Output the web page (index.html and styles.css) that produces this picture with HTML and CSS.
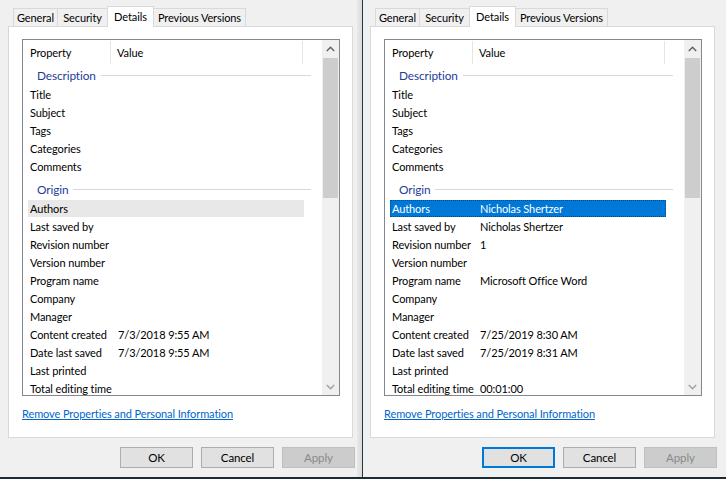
FILE: index.html
```html
<!DOCTYPE html>
<html>
<head>
<meta charset="utf-8">
<link rel="stylesheet" href="styles.css">
</head>
<body>
<div class="screen">
  <div class="dialog">
    <div class="tabs">
      <div class="tab tab-general">General</div>
      <div class="tab tab-security">Security</div>
      <div class="tab tab-details tab-active">Details</div>
      <div class="tab tab-previous">Previous Versions</div>
    </div>
    <div class="page">
      <div class="listbox">
        <div class="list">
          <div class="list-header"><div class="col-prop">Property</div><div class="col-val">Value</div><div class="col-rest"></div></div>
          <div class="group group-first"><span>Description</span></div>
          <div class="row"><span class="k">Title</span><span class="v"></span></div>
          <div class="row"><span class="k">Subject</span><span class="v"></span></div>
          <div class="row"><span class="k">Tags</span><span class="v"></span></div>
          <div class="row"><span class="k">Categories</span><span class="v"></span></div>
          <div class="row"><span class="k">Comments</span><span class="v"></span></div>
          <div class="group"><span>Origin</span></div>
          <div class="row row-hover"><span class="k">Authors</span><span class="v"></span></div>
          <div class="row"><span class="k">Last saved by</span><span class="v"></span></div>
          <div class="row"><span class="k">Revision number</span><span class="v"></span></div>
          <div class="row"><span class="k">Version number</span><span class="v"></span></div>
          <div class="row"><span class="k">Program name</span><span class="v"></span></div>
          <div class="row"><span class="k">Company</span><span class="v"></span></div>
          <div class="row"><span class="k">Manager</span><span class="v"></span></div>
          <div class="row"><span class="k">Content created</span><span class="v">7/3/2018 9:55 AM</span></div>
          <div class="row"><span class="k">Date last saved</span><span class="v">7/3/2018 9:55 AM</span></div>
          <div class="row"><span class="k">Last printed</span><span class="v"></span></div>
          <div class="row"><span class="k">Total editing time</span><span class="v"></span></div>
        </div>
        <div class="scrollbar">
          <div class="sb-btn"><svg width="9" height="6" viewBox="0 0 9 6"><polyline points="0.8,5 4.5,1.3 8.2,5" fill="none" stroke="#606060" stroke-width="1.4"/></svg></div>
          <div class="sb-track"><div class="sb-thumb"></div></div>
          <div class="sb-btn"><svg width="9" height="6" viewBox="0 0 9 6"><polyline points="0.8,1 4.5,4.7 8.2,1" fill="none" stroke="#a0a0a0" stroke-width="1.4"/></svg></div>
        </div>
      </div>
      <a class="link" href="#">Remove Properties and Personal Information</a>
    </div>
    <div class="buttons">
      <div class="btn">OK</div>
      <div class="btn">Cancel</div>
      <div class="btn btn-disabled">Apply</div>
    </div>
  </div>
  <div class="edge"></div>
  <div class="divider"></div>
  <div class="dialog dialog-right">
    <div class="tabs">
      <div class="tab tab-general">General</div>
      <div class="tab tab-security">Security</div>
      <div class="tab tab-details tab-active">Details</div>
      <div class="tab tab-previous">Previous Versions</div>
    </div>
    <div class="page">
      <div class="listbox">
        <div class="list">
          <div class="list-header"><div class="col-prop">Property</div><div class="col-val">Value</div><div class="col-rest"></div></div>
          <div class="group group-first"><span>Description</span></div>
          <div class="row"><span class="k">Title</span><span class="v"></span></div>
          <div class="row"><span class="k">Subject</span><span class="v"></span></div>
          <div class="row"><span class="k">Tags</span><span class="v"></span></div>
          <div class="row"><span class="k">Categories</span><span class="v"></span></div>
          <div class="row"><span class="k">Comments</span><span class="v"></span></div>
          <div class="group"><span>Origin</span></div>
          <div class="row row-selected"><span class="k">Authors</span><span class="v">Nicholas Shertzer</span></div>
          <div class="row"><span class="k">Last saved by</span><span class="v">Nicholas Shertzer</span></div>
          <div class="row"><span class="k">Revision number</span><span class="v">1</span></div>
          <div class="row"><span class="k">Version number</span><span class="v"></span></div>
          <div class="row"><span class="k">Program name</span><span class="v">Microsoft Office Word</span></div>
          <div class="row"><span class="k">Company</span><span class="v"></span></div>
          <div class="row"><span class="k">Manager</span><span class="v"></span></div>
          <div class="row"><span class="k">Content created</span><span class="v">7/25/2019 8:30 AM</span></div>
          <div class="row"><span class="k">Date last saved</span><span class="v">7/25/2019 8:31 AM</span></div>
          <div class="row"><span class="k">Last printed</span><span class="v"></span></div>
          <div class="row"><span class="k">Total editing time</span><span class="v">00:01:00</span></div>
        </div>
        <div class="scrollbar">
          <div class="sb-btn"><svg width="9" height="6" viewBox="0 0 9 6"><polyline points="0.8,5 4.5,1.3 8.2,5" fill="none" stroke="#606060" stroke-width="1.4"/></svg></div>
          <div class="sb-track"><div class="sb-thumb"></div></div>
          <div class="sb-btn"><svg width="9" height="6" viewBox="0 0 9 6"><polyline points="0.8,1 4.5,4.7 8.2,1" fill="none" stroke="#a0a0a0" stroke-width="1.4"/></svg></div>
        </div>
      </div>
      <a class="link" href="#">Remove Properties and Personal Information</a>
    </div>
    <div class="buttons">
      <div class="btn btn-default">OK</div>
      <div class="btn">Cancel</div>
      <div class="btn btn-disabled">Apply</div>
    </div>
  </div>
</div>
<div class="taskbar"></div>
</body>
</html>
```
FILE: styles.css
```css
html, body {
  margin: 0;
  padding: 0;
}
body {
  width: 726px;
  height: 479px;
  overflow: hidden;
  background: #f0f0f0;
  font-family: "Lato", "Segoe UI", "Noto Sans", sans-serif;
  font-size: 11px;
  letter-spacing: -0.1px;
  color: #000;
}
.screen {
  display: flex;
  height: 477px;
}
.dialog {
  width: 357px;
  padding-left: 8px;
  box-sizing: border-box;
  display: flex;
  flex-direction: column;
}
.dialog-right {
  width: 363px;
  padding-left: 7px;
}
.edge {
  width: 5px;
  background: linear-gradient(to right, #e9e9e9, #dadada);
}
.divider {
  width: 1px;
  background: #223846;
}
.taskbar {
  height: 2px;
  background: #1c2a34;
}
.tabs {
  display: flex;
  align-items: flex-end;
  height: 20px;
  margin-top: 6px;
  padding-left: 5px;
  position: relative;
  z-index: 1;
}
.tab {
  height: 18px;
  line-height: 17px;
  border: 1px solid #d9d9d9;
  border-bottom: none;
  margin-right: -1px;
  background: #f0f0f0;
  box-sizing: border-box;
  white-space: nowrap;
  text-align: center;
}
.tab-general { width: 45px; }
.tab-security { width: 51px; }
.tab-details { width: 47px; }
.tab-previous { width: 93px; }
.tab-active {
  height: 21px;
  line-height: 19px;
  margin-bottom: -1px;
  background: #fff;
  position: relative;
  z-index: 2;
}
.page {
  width: 345px;
  height: 412px;
  box-sizing: border-box;
  background: #fff;
  border: 1px solid #d9d9d9;
  padding: 12px 0 0 13px;
}
.listbox {
  width: 318px;
  height: 357px;
  box-sizing: border-box;
  border: 1px solid #828790;
  display: flex;
  overflow: hidden;
}
.list {
  width: 299px;
  overflow: hidden;
}
.list-header {
  display: flex;
  height: 24px;
}
.col-prop {
  width: 88px;
  padding-left: 7px;
  box-sizing: border-box;
  border-right: 1px solid #e5e5e5;
  margin-top: 1px;
  line-height: 23px;
}
.col-val {
  width: 192px;
  padding-left: 6px;
  box-sizing: border-box;
  border-right: 1px solid #e5e5e5;
  margin-top: 1px;
  line-height: 23px;
}
.group {
  display: flex;
  align-items: center;
  height: 22px;
  margin-top: 2px;
  padding-left: 14px;
  margin-right: 11px;
  color: #1e3c9a;
  font-size: 11.8px;
}
.group-first {
  margin-top: 0;
}
.group::after {
  content: "";
  flex: 1;
  height: 1px;
  margin-left: 5px;
  background: #d5d9e6;
}
.row {
  display: flex;
  height: 18px;
  line-height: 18px;
  margin-left: 5px;
  width: 276px;
  white-space: nowrap;
}
.row .k {
  width: 88px;
  padding-left: 2px;
  flex: none;
}
.row-hover {
  background: #e8e8e8;
  height: 17px;
  margin-bottom: 1px;
}
.row-selected {
  background: #0078d7;
  color: #fff;
  height: 17px;
  margin-bottom: 1px;
  outline: 1px dotted rgba(0, 0, 0, 0.35);
  outline-offset: -1px;
}
.scrollbar {
  width: 17px;
  background: #f0f0f0;
  display: flex;
  flex-direction: column;
}
.sb-btn {
  height: 17px;
  display: flex;
  align-items: center;
  justify-content: center;
  flex: none;
}
.sb-track {
  flex: 1;
  padding: 1px 1px 0 1px;
}
.sb-thumb {
  height: 140px;
  background: #cdcdcd;
}
.link {
  display: block;
  margin-top: 10px;
  line-height: 16px;
  color: #0066cc;
  text-decoration: underline;
  width: max-content;
}
.buttons {
  display: flex;
  gap: 8px;
  margin-top: 9px;
  padding-left: 112px;
}
.btn {
  width: 73px;
  height: 21px;
  box-sizing: border-box;
  border: 1px solid #adadad;
  background: #e1e1e1;
  text-align: center;
  line-height: 19px;
  font-size: 11.5px;
}
.btn-default {
  border-color: #0078d7;
  box-shadow: inset 0 0 0 1px #0078d7;
}
.btn-disabled {
  background: #cccccc;
  border-color: #bfbfbf;
  color: #8a8a8a;
}
```
